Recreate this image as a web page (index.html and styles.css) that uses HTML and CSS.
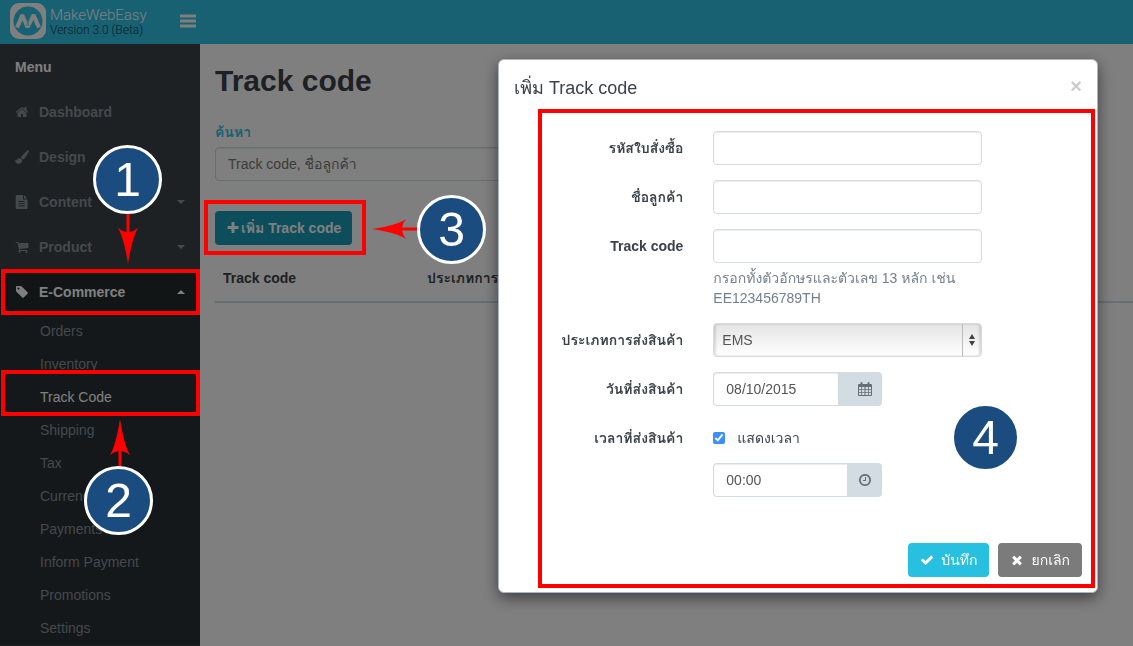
FILE: index.html
```html
<!DOCTYPE html>
<html lang="th">
<head>
    <meta charset="UTF-8">
    <meta name="viewport" content="width=device-width, initial-scale=1.0">
    <title>Track code</title>
    <link rel="stylesheet" href="styles.css">
</head>
<body>
    <header class="topbar">
        <a class="brand" href="#">
            <svg class="brand-logo" viewBox="0 0 36 36">
                <rect x="0" y="0" width="36" height="36" rx="9" fill="#fff"/>
                <circle cx="18" cy="18" r="14.500" fill="#2fc3e6"/>
                <path d="M7 24.500L12.500 12L17.500 24L23.500 12L29 24.500" fill="none" stroke="#fff" stroke-width="4.200" stroke-linejoin="bevel"/>
                <path d="M14.500 11.500L19 23M21.500 11.500L16.500 23" stroke="#2fc3e6" stroke-width="0.600"/>
            </svg>
            <span class="brand-text">
                <span class="brand-name">MakeWebEasy</span>
                <span class="brand-version">Version 3.0 (Beta)</span>
            </span>
        </a>
        <button class="menu-toggle" type="button" aria-label="Menu">
            <svg viewBox="0 0 16 14"><path d="M1 2h14M1 7h14M1 12h14" stroke="currentColor" stroke-width="3" stroke-linecap="round"/></svg>
        </button>
    </header>

    <div class="layout">
        <nav class="sidebar">
            <h2 class="menu-title">Menu</h2>
            <ul class="menu">
                <li><a class="menu-link" href="#">
                    <svg class="icon" viewBox="0 0 1792 1792"><path d="M1472 992v480q0 26-19 45t-45 19h-384v-384h-256v384h-384q-26 0-45-19t-19-45v-480q0-1 .5-3t.5-3l575-474 575 474q1 2 1 6zm223-69l-62 74q-8 9-21 11h-3q-13 0-21-7l-692-577-692 577q-12 8-24 7-13-2-21-11l-62-74q-8-10-7-23.500t11-21.500l719-599q32-26 76-26t76 26l244 204v-195q0-14 9-23t23-9h192q14 0 23 9t9 23v408l219 182q10 8 11 21.500t-7 23.500z"/></svg>
                    <span>Dashboard</span></a></li>
                <li><a class="menu-link" href="#">
                    <svg class="icon" viewBox="0 0 14 14"><path d="M13.600 .3c.5.4.5.900.2 1.500L9.600 8.300c-.5.7-1 1.100-1.700 1.200L6 7.900c0-.7.3-1.200.9-1.800L12.200.6c.4-.4 1-.6 1.400-.3zM5.300 8.400l2 1.700c0 2.400-1.400 3.700-3.700 3.700C1.200 13.800.1 12.100 0 9.700c.5.4 1 .7 1.400.6.5-.1.6-.6.900-1.100.6-.9 1.700-1.200 3-.8z"/></svg>
                    <span>Design</span></a></li>
                <li><a class="menu-link" href="#">
                    <svg class="icon" viewBox="0 0 14 14"><path fill-rule="evenodd" d="M1.600 0H8v4.500h4.500V13q0 1-.9 1H1.600q-.9 0-.9-1V1q0-1 .9-1zM9 .1L12.400 3.500H9zM3.500 6v1h6.300V6zm0 2.200v1h6.300v-1zm0 2.300v1h6.300v-1z"/></svg>
                    <span>Content</span><i class="caret"></i></a></li>
                <li><a class="menu-link" href="#">
                    <svg class="icon" viewBox="0 0 1792 1792"><path d="M704 1536q0 52-38 90t-90 38-90-38-38-90 38-90 90-38 90 38 38 90zm896 0q0 52-38 90t-90 38-90-38-38-90 38-90 90-38 90 38 38 90zm128-1088v512q0 24-16.500 42.500t-40.500 21.500l-1044 122q13 60 13 70 0 16-24 64h920q26 0 45 19t19 45-19 45-45 19h-1024q-26 0-45-19t-19-45q0-11 8-31.500t16-36 21.500-40 15.500-29.500l-177-823h-204q-26 0-45-19t-19-45 19-45 45-19h256q16 0 28.500 6.500t19.500 15.500 13 24.500 8 26 5.500 29.500 4.500 26h1201q26 0 45 19t19 45z"/></svg>
                    <span>Product</span><i class="caret"></i></a></li>
                <li class="open">
                    <a class="menu-link" href="#">
                    <svg class="icon" viewBox="0 0 1792 1792"><path d="M576 448q0-53-37.500-90.500t-90.500-37.500-90.500 37.500-37.500 90.500 37.500 90.500 90.500 37.500 90.500-37.500 37.500-90.500zm1067 576q0 53-37 90l-491 492q-39 37-91 37-53 0-90-37l-715-716q-38-37-64.500-101t-26.500-117v-416q0-52 38-90t90-38h416q53 0 117 26.500t102 64.500l715 714q37 39 37 91z"/></svg>
                    <span>E-Commerce</span><i class="caret"></i></a>
                    <ul class="submenu">
                        <li><a href="#">Orders</a></li>
                        <li><a href="#">Inventory</a></li>
                        <li><a class="active" href="#">Track Code</a></li>
                        <li><a href="#">Shipping</a></li>
                        <li><a href="#">Tax</a></li>
                        <li><a href="#">Currency</a></li>
                        <li><a href="#">Payments</a></li>
                        <li><a href="#">Inform Payment</a></li>
                        <li><a href="#">Promotions</a></li>
                        <li><a href="#">Settings</a></li>
                    </ul>
                </li>
            </ul>
        </nav>

        <main class="content">
            <h1>Track code</h1>
            <label class="search-label" for="search">ค้นหา</label>
            <input class="form-control search" type="text" id="search" placeholder="Track code, ชื่อลูกค้า">
            <button class="btn btn-add" type="button">
                <svg class="icon" viewBox="0 0 1792 1792"><path d="M1600 736v192q0 40-28 68t-68 28h-416v416q0 40-28 68t-68 28h-192q-40 0-68-28t-28-68v-416h-416q-40 0-68-28t-28-68v-192q0-40 28-68t68-28h416v-416q0-40 28-68t68-28h192q40 0 68 28t28 68v416h416q40 0 68 28t28 68z"/></svg>
                <span>เพิ่ม Track code</span>
            </button>
            <table class="table">
                <thead>
                    <tr><th>Track code</th><th>ประเภทการส่งสินค้า</th></tr>
                </thead>
            </table>
        </main>
    </div>

    <div class="backdrop">
        <form class="modal" role="dialog" aria-labelledby="modal-title">
            <div class="modal-header">
                <h2 id="modal-title">เพิ่ม Track code</h2>
                <button class="close" type="button" aria-label="Close">×</button>
            </div>
            <div class="modal-body">
                <div class="form-group">
                    <label for="order">รหัสใบสั่งซื้อ</label>
                    <div class="field"><input class="form-control" type="text" id="order"></div>
                </div>
                <div class="form-group">
                    <label for="customer">ชื่อลูกค้า</label>
                    <div class="field"><input class="form-control" type="text" id="customer"></div>
                </div>
                <div class="form-group">
                    <label for="code">Track code</label>
                    <div class="field">
                        <input class="form-control" type="text" id="code">
                        <p class="help">กรอกทั้งตัวอักษรและตัวเลข 13 หลัก เช่น EE123456789TH</p>
                    </div>
                </div>
                <div class="form-group">
                    <label for="type">ประเภทการส่งสินค้า</label>
                    <div class="field">
                        <div class="select">
                            <select class="form-control" id="type"><option>EMS</option></select>
                            <span class="select-arrows"><svg viewBox="0 0 6 12"><path d="M3 0l3 5H0zM3 12l3-5H0z"/></svg></span>
                        </div>
                    </div>
                </div>
                <div class="form-group">
                    <label for="date">วันที่ส่งสินค้า</label>
                    <div class="field">
                        <div class="input-group">
                            <input class="form-control" type="text" id="date" value="08/10/2015">
                            <button class="addon addon-date" type="button" aria-label="Calendar">
                                <svg class="icon" viewBox="0 0 14 14"><path fill-rule="evenodd" d="M1 2h1.500V1Q2.500 0 3.500 0T4.500 1v1h5V1q0-1 1-1t1 1v1H13q1 0 1 1v10q0 1-1 1H1q-1 0-1-1V3q0-1 1-1zM1 5v2.200h2.200V5zm3 0v2.200h2.500V5zm3.500 0v2.200H10V5zm3.300 0v2.200H13V5zM1 8v2.200h2.200V8zm3 0v2.200h2.500V8zm3.500 0v2.200H10V8zm3.300 0v2.200H13V8zM1 11v2h2.200v-2zm3 0v2h2.500v-2zm3.500 0v2H10v-2zm3.300 0v2H13v-2z"/></svg>
                            </button>
                        </div>
                    </div>
                </div>
                <div class="form-group">
                    <label for="time">เวลาที่ส่งสินค้า</label>
                    <div class="field">
                        <label class="checkbox"><input type="checkbox" checked> แสดงเวลา</label>
                        <div class="input-group">
                            <input class="form-control" type="text" id="time" value="00:00">
                            <button class="addon" type="button" aria-label="Clock">
                                <svg class="icon" viewBox="0 0 1792 1792"><path d="M1024 544v448q0 14-9 23t-23 9h-320q-14 0-23-9t-9-23v-64q0-14 9-23t23-9h224v-352q0-14 9-23t23-9h64q14 0 23 9t9 23zm416 352q0-148-73-273t-198-198-273-73-273 73-198 198-73 273 73 273 198 198 273 73 273-73 198-198 73-273zm224 0q0 209-103 385.500t-279.500 279.500-385.500 103-385.500-103-279.500-279.500-103-385.500 103-385.500 279.500-279.500 385.500-103 385.500 103 279.500 279.500 103 385.500z"/></svg>
                            </button>
                        </div>
                    </div>
                </div>
            </div>
            <div class="modal-footer">
                <button class="btn btn-save" type="submit">
                    <svg class="icon" viewBox="0 0 1792 1792"><path d="M1671 566q0 40-28 68l-724 724-136 136q-28 28-68 28t-68-28l-136-136-362-362q-28-28-28-68t28-68l136-136q28-28 68-28t68 28l294 295 656-657q28-28 68-28t68 28l136 136q28 28 28 68z"/></svg>
                    <span>บันทึก</span>
                </button>
                <button class="btn btn-cancel" type="button">
                    <svg class="icon" viewBox="0 0 1792 1792"><path d="M1490 1322q0 40-28 68l-136 136q-28 28-68 28t-68-28l-294-294-294 294q-28 28-68 28t-68-28l-136-136q-28-28-28-68t28-68l294-294-294-294q-28-28-28-68t28-68l136-136q28-28 68-28t68 28l294 294 294-294q28-28 68-28t68 28l136 136q28 28 28 68t-28 68l-294 294 294 294q28 28 28 68z"/></svg>
                    <span>ยกเลิก</span>
                </button>
            </div>
        </form>
    </div>

    <!-- numbered steps over the page -->
    <div class="steps">
        <div class="frame frame-1"></div>
        <div class="frame frame-2"></div>
        <div class="frame frame-3"></div>
        <div class="frame frame-4"></div>
        <svg class="arrow arrow-1" viewBox="0 0 22 52"><path d="M9.500 0h3v20q5-1 8.500-4Q15 26 11 52Q7 26 1 16q3.500 3 8.500 4z"/></svg>
        <svg class="arrow arrow-2" viewBox="0 0 22 52"><path d="M9.500 52h3V32q5 1 8.500 4Q15 26 11 0Q7 26 1 36q3.500-3 8.500-4z"/></svg>
        <svg class="arrow arrow-3" viewBox="0 0 52 22"><path d="M52 9.500v3H30q1 5 4 8.500Q26 15 0 11Q26 7 34 1q-3 3.500-4 8.500z"/></svg>
        <div class="step step-1">1</div>
        <div class="step step-2">2</div>
        <div class="step step-3">3</div>
        <div class="step step-4">4</div>
    </div>
</body>
</html>
```
FILE: styles.css
```css
* {
    box-sizing: border-box;
}
body {
    margin: 0;
    height: 100vh;
    overflow: hidden;
    display: flex;
    flex-direction: column;
    font-family: "Liberation Sans", Loma, Waree, Garuda, "Noto Sans Thai Looped", sans-serif;
    font-size: 14px;
    line-height: 20px;
    color: #3a4248;
    background: #fff;
}
ul {
    list-style: none;
    margin: 0;
    padding: 0;
}
a {
    color: inherit;
    text-decoration: none;
}
button, input, select {
    font: inherit;
    color: inherit;
}
.icon {
    width: 14px;
    height: 14px;
    flex: none;
    fill: currentColor;
}

/* top bar */
.topbar {
    flex: none;
    display: flex;
    align-items: center;
    gap: 33px;
    height: 44px;
    padding: 0 10px 3px;
    color: #fff;
    background: #2fc3e6;
}
.brand {
    display: flex;
    gap: 4px;
}
.brand-logo {
    width: 36px;
    height: 36px;
}
.brand-text {
    display: flex;
    flex-direction: column;
    padding-top: 5px;
    font-family: Roboto, sans-serif;
    font-weight: 300;
}
.brand-name {
    font-size: 15px;
    line-height: 15px;
}
.brand-version {
    font-size: 12px;
    line-height: 14px;
    color: #0c4350;
}
.menu-toggle {
    display: flex;
    padding: 0;
    border: none;
    background: none;
}
.menu-toggle svg {
    width: 16px;
    height: 14px;
}

/* sidebar */
.layout {
    flex: 1;
    display: flex;
    min-height: 0;
}
.sidebar {
    flex: none;
    width: 200px;
    overflow: hidden;
    color: #889299;
    background: #3a4246;
}
.menu-title {
    margin: 0;
    padding: 1px 15px 0;
    font-size: 14px;
    line-height: 44px;
    color: #fff;
}
.menu-link {
    display: flex;
    align-items: center;
    gap: 10px;
    height: 45px;
    padding: 0 15px;
    font-weight: bold;
}
.caret {
    margin-left: auto;
    border: 4px solid transparent;
    border-top-color: currentColor;
    border-bottom: none;
}
.open .caret {
    border-top: none;
    border-bottom: 4px solid currentColor;
}
.open > .menu-link {
    color: #fff;
    background: #242a2d;
}
.submenu {
    padding-top: 1px;
    background: #2a3034;
}
.submenu a {
    display: block;
    padding-left: 40px;
    line-height: 33px;
}
.submenu .active {
    color: #fff;
}

/* page */
.content {
    flex: 1;
    display: flex;
    flex-direction: column;
    align-items: flex-start;
    min-width: 0;
    padding: 20px 0 0 15px;
}
h1 {
    margin: 0 0 25px;
    font-size: 30px;
    line-height: 33px;
}
.search-label {
    margin-bottom: 5px;
    font-weight: bold;
    color: #2fc3e6;
}
.form-control {
    width: 100%;
    height: 34px;
    padding: 6px 12px;
    border: 1px solid #d3dce3;
    border-radius: 4px;
    color: #555;
    background: #fff;
    box-shadow: inset 0 1px 1px rgba(0, 0, 0, 0.08);
}
.form-control::placeholder {
    color: #777;
}
.search {
    width: 50%;
}
.btn {
    display: flex;
    align-items: center;
    height: 34px;
    padding: 0 12px;
    border: none;
    border-radius: 4px;
    color: #fff;
}
.btn-add {
    gap: 1px;
    margin: 30px 0 13px;
    padding: 0 11px;
    font-weight: bold;
    background: #1b9cb8;
}
.table {
    width: 100%;
    border-collapse: collapse;
}
.table th {
    padding: 10px 8px 13px;
    text-align: left;
    border-bottom: 2px solid #d3dce3;
}
.table th:first-child {
    width: 204px;
}

/* modal */
.backdrop {
    position: fixed;
    inset: 0;
    display: flex;
    justify-content: flex-end;
    align-items: flex-start;
    padding: 59px 35px;
    background: rgba(0, 0, 0, 0.5);
}
.modal {
    width: 600px;
    border: 1px solid #a9b6c0;
    border-radius: 6px;
    background: #fff;
    box-shadow: 0 5px 15px rgba(0, 0, 0, 0.5);
}
.modal-header {
    display: flex;
    justify-content: space-between;
    align-items: center;
    height: 56px;
    padding: 0 15px;
}
.modal-header h2 {
    margin: 0;
    font-size: 18px;
    font-weight: normal;
}
.close {
    padding: 0 0 4px;
    border: none;
    font-size: 20px;
    font-weight: bold;
    color: #ccc;
    background: none;
}
.modal-body {
    padding: 15px 0;
}
.form-group {
    display: flex;
    margin-bottom: 15px;
}
.form-group > label {
    width: 33.333%;
    padding: 7px 15px 0;
    font-weight: bold;
    text-align: right;
}
.field {
    width: 50%;
    padding: 0 15px;
}
.help {
    margin: 5px 0 0;
    color: #73818c;
}
.select {
    position: relative;
}
.select select {
    appearance: none;
    padding: 0 30px 0 8px;
    background: linear-gradient(#e4e4e4, #fff);
    box-shadow: inset 2px 0 2px rgba(0, 0, 0, 0.12), inset -2px 0 2px rgba(0, 0, 0, 0.12);
}
.select-arrows {
    position: absolute;
    top: 1px;
    right: 0;
    bottom: 1px;
    display: flex;
    align-items: center;
    padding: 0 7px 0 6px;
    border-left: 1px solid #bbb;
    pointer-events: none;
}
.select-arrows svg {
    width: 6px;
    height: 12px;
    fill: #444;
}
.input-group {
    display: flex;
    width: 169px;
}
.input-group .form-control {
    flex: 1;
    min-width: 0;
    border-right: none;
    border-radius: 4px 0 0 4px;
}
.addon {
    display: flex;
    align-items: center;
    height: 34px;
    padding: 0 10px 0 11px;
    border: none;
    border-radius: 0 4px 4px 0;
    color: #666f77;
    background: #d3dce3;
}
.addon-date {
    padding-left: 20px;
}
.checkbox {
    display: flex;
    align-items: center;
    gap: 12px;
    padding: 7px 0 15px;
}
.checkbox input {
    width: 12px;
    height: 12px;
    margin: 0;
    accent-color: #3b8ffb;
}
.modal-footer {
    display: flex;
    justify-content: flex-end;
    gap: 9px;
    padding: 16px 15px 15px;
}
.modal-footer .btn {
    gap: 7px;
}
.btn-save {
    background: #27c0e1;
}
.btn-cancel {
    background: #7b7b7b;
}

/* numbered steps */
.steps {
    position: fixed;
    inset: 0;
    pointer-events: none;
}
.steps > * {
    position: absolute;
}
.frame {
    border: 4px solid #f00;
}
.frame-1 {
    left: 1px;
    top: 269px;
    width: 199px;
    height: 46px;
}
.frame-2 {
    left: 1px;
    top: 370px;
    width: 199px;
    height: 46px;
}
.frame-3 {
    left: 204px;
    top: 200px;
    width: 162px;
    height: 55px;
}
.frame-4 {
    right: 38px;
    top: 109px;
    width: 557px;
    height: 479px;
}
.arrow {
    width: 22px;
    height: 52px;
    fill: #f00;
}
.arrow-1 {
    left: 117px;
    top: 212px;
}
.arrow-2 {
    left: 109px;
    top: 419px;
}
.arrow-3 {
    left: 372px;
    top: 218px;
    width: 52px;
    height: 22px;
}
.step {
    width: 69px;
    height: 69px;
    border: 3px solid #fff;
    border-radius: 50%;
    font-size: 48px;
    line-height: 63px;
    text-align: center;
    color: #fff;
    background: #1a4c80;
}
.step-1 {
    left: 93px;
    top: 145px;
}
.step-2 {
    left: 84px;
    top: 466px;
}
.step-3 {
    left: 417px;
    top: 195px;
}
.step-4 {
    right: 113px;
    top: 403px;
}
```
